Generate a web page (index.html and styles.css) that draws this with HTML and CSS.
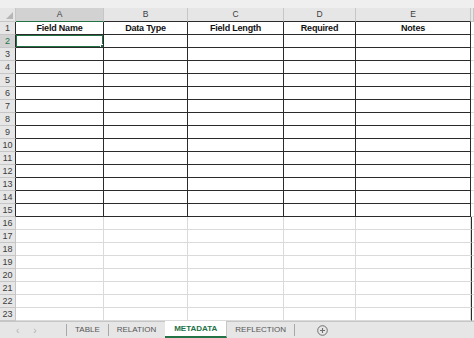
FILE: index.html
```html
<!DOCTYPE html>
<html>
<head>
  <meta charset="UTF-8">
  <title>Metadata</title>
  <link rel="stylesheet" href="styles.css">
</head>
<body>

  <div class="pasek"></div>

  <table class="arkusz">
    <colgroup>
      <col class="k0"><col class="ka"><col class="kb"><col class="kc"><col class="kd"><col class="ke"><col class="kf">
    </colgroup>
    <tr class="naglowek">
      <th class="rog"><span class="trojkat"></span></th>
      <th class="wybrana">A</th><th>B</th><th>C</th><th>D</th><th>E</th><th class="reszta"></th>
    </tr>
    <tr class="d tytul"><th>1</th><td>Field Name</td><td>Data Type</td><td>Field Length</td><td>Required</td><td>Notes</td><td class="reszta"></td></tr>
    <tr class="d"><th class="wybrany">2</th><td class="zaznaczona"><span class="ramka"></span></td><td></td><td></td><td></td><td></td><td class="reszta"></td></tr>
    <tr class="d"><th>3</th><td></td><td></td><td></td><td></td><td></td><td class="reszta"></td></tr>
    <tr class="d"><th>4</th><td></td><td></td><td></td><td></td><td></td><td class="reszta"></td></tr>
    <tr class="d"><th>5</th><td></td><td></td><td></td><td></td><td></td><td class="reszta"></td></tr>
    <tr class="d"><th>6</th><td></td><td></td><td></td><td></td><td></td><td class="reszta"></td></tr>
    <tr class="d"><th>7</th><td></td><td></td><td></td><td></td><td></td><td class="reszta"></td></tr>
    <tr class="d"><th>8</th><td></td><td></td><td></td><td></td><td></td><td class="reszta"></td></tr>
    <tr class="d"><th>9</th><td></td><td></td><td></td><td></td><td></td><td class="reszta"></td></tr>
    <tr class="d"><th>10</th><td></td><td></td><td></td><td></td><td></td><td class="reszta"></td></tr>
    <tr class="d"><th>11</th><td></td><td></td><td></td><td></td><td></td><td class="reszta"></td></tr>
    <tr class="d"><th>12</th><td></td><td></td><td></td><td></td><td></td><td class="reszta"></td></tr>
    <tr class="d"><th>13</th><td></td><td></td><td></td><td></td><td></td><td class="reszta"></td></tr>
    <tr class="d"><th>14</th><td></td><td></td><td></td><td></td><td></td><td class="reszta"></td></tr>
    <tr class="d"><th>15</th><td></td><td></td><td></td><td></td><td></td><td class="reszta"></td></tr>
    <tr><th>16</th><td></td><td></td><td></td><td></td><td></td><td class="reszta"></td></tr>
    <tr><th>17</th><td></td><td></td><td></td><td></td><td></td><td class="reszta"></td></tr>
    <tr><th>18</th><td></td><td></td><td></td><td></td><td></td><td class="reszta"></td></tr>
    <tr><th>19</th><td></td><td></td><td></td><td></td><td></td><td class="reszta"></td></tr>
    <tr><th>20</th><td></td><td></td><td></td><td></td><td></td><td class="reszta"></td></tr>
    <tr><th>21</th><td></td><td></td><td></td><td></td><td></td><td class="reszta"></td></tr>
    <tr><th>22</th><td></td><td></td><td></td><td></td><td></td><td class="reszta"></td></tr>
    <tr><th>23</th><td></td><td></td><td></td><td></td><td></td><td class="reszta"></td></tr>
  </table>

  <div class="zakladki">
    <div class="strzalki">
      <span>&lsaquo;</span>
      <span>&rsaquo;</span>
    </div>
    <span class="kreska"></span>
    <span class="zakladka">TABLE</span>
    <span class="kreska"></span>
    <span class="zakladka">RELATION</span>
    <span class="zakladka aktywna">METADATA</span>
    <span class="zakladka">REFLECTION</span>
    <span class="kreska"></span>
    <span class="dodaj">
      <svg width="11" height="11" viewBox="0 0 11 11">
        <circle cx="5.5" cy="5.5" r="4.8" fill="none" stroke="#6f6f6f" stroke-width="1"/>
        <path d="M5.5 3v5M3 5.5h5" stroke="#6f6f6f" stroke-width="1.1"/>
      </svg>
    </span>
  </div>

</body>
</html>
```

FILE: styles.css
```css
body {
  margin: 0;
  padding: 0;
  width: 474px;
  height: 338px;
  overflow: hidden;
  background-color: white;
  font-family: 'Liberation Sans', Arial, sans-serif;
}

.pasek {
  height: 8px;
  background-color: #efefef;
}

.arkusz {
  border-collapse: separate;
  border-spacing: 0;
  table-layout: fixed;
  width: 474px;
}

.k0 { width: 16px; }
.ka { width: 88px; }
.kb { width: 84px; }
.kc { width: 96px; }
.kd { width: 72px; }
.ke { width: 115px; }
.kf { width: 3px; }

.arkusz tr {
  height: 13px;
}

.arkusz th,
.arkusz td {
  box-sizing: border-box;
  height: 13px;
  padding: 0;
  border-right: 1px solid #dadada;
  border-bottom: 1px solid #dadada;
  line-height: 12px;
  overflow: hidden;
  white-space: nowrap;
}

.arkusz th {
  background-color: #e6e6e6;
  border-color: #c6c6c6;
  color: #3c3c3c;
  font-weight: normal;
  font-size: 9px;
  text-align: center;
}

.arkusz .naglowek {
  height: 14px;
}

.naglowek th {
  height: 14px;
  line-height: 13px;
  font-size: 8.5px;
  background-color: #e6e6e6;
  border-bottom-color: #2b2b2b;
}

.naglowek .rog {
  position: relative;
  border-bottom-color: #c6c6c6;
}

.trojkat {
  position: absolute;
  right: 2px;
  bottom: 2px;
  border-left: 7px solid transparent;
  border-bottom: 7px solid #b6b6b6;
}

.naglowek .wybrana {
  background-color: #d2d2d2;
  border-bottom: 1px solid #217346;
}

.naglowek .reszta {
  border-bottom-color: #c6c6c6;
}

.arkusz th.wybrany {
  background-color: #d2d2d2;
  color: #217346;
}

.d th {
  border-right-color: #2b2b2b;
}

.d td {
  border-right-color: #2b2b2b;
  border-bottom-color: #2b2b2b;
}

.d td.reszta {
  border-right-color: #dadada;
  border-bottom-color: #dadada;
}

.arkusz td.reszta {
  border-left: 1px solid #2b2b2b;
  border-right: none;
}

.d td.reszta {
  border-left: none;
}

.tytul td {
  font-weight: bold;
  font-size: 9px;
  letter-spacing: -0.2px;
  color: #111;
  text-align: center;
}

.zaznaczona {
  position: relative;
}

.ramka {
  position: absolute;
  left: -1px;
  top: -1px;
  right: -1px;
  bottom: -1px;
  border: 2px solid #217346;
}

.ramka::after {
  content: "";
  position: absolute;
  right: -4px;
  bottom: -4px;
  width: 4px;
  height: 4px;
  background-color: #217346;
  border: 1px solid white;
}

.zakladki {
  display: flex;
  align-items: center;
  height: 17px;
  background-color: #e6e6e6;
  border-top: 1px solid #c6c6c6;
  box-sizing: border-box;
  font-size: 8px;
  color: #555;
}

.strzalki {
  display: flex;
  gap: 14px;
  width: 66px;
  padding-left: 16px;
  box-sizing: border-box;
  color: #b0b0b0;
  font-size: 10px;
}

.kreska {
  width: 1px;
  height: 12px;
  background-color: #a8a8a8;
}

.zakladka {
  padding: 0 8px;
  height: 16px;
  line-height: 16px;
}

.zakladka.aktywna {
  background-color: white;
  color: #217346;
  font-weight: bold;
  height: 17px;
  line-height: 16px;
  margin-top: -1px;
  margin-left: 1px;
  border-bottom: 2px solid #217346;
  border-right: 1px solid #c6c6c6;
  box-sizing: border-box;
  padding: 0 9px;
}

.dodaj {
  display: flex;
  margin-left: 22px;
}
```
